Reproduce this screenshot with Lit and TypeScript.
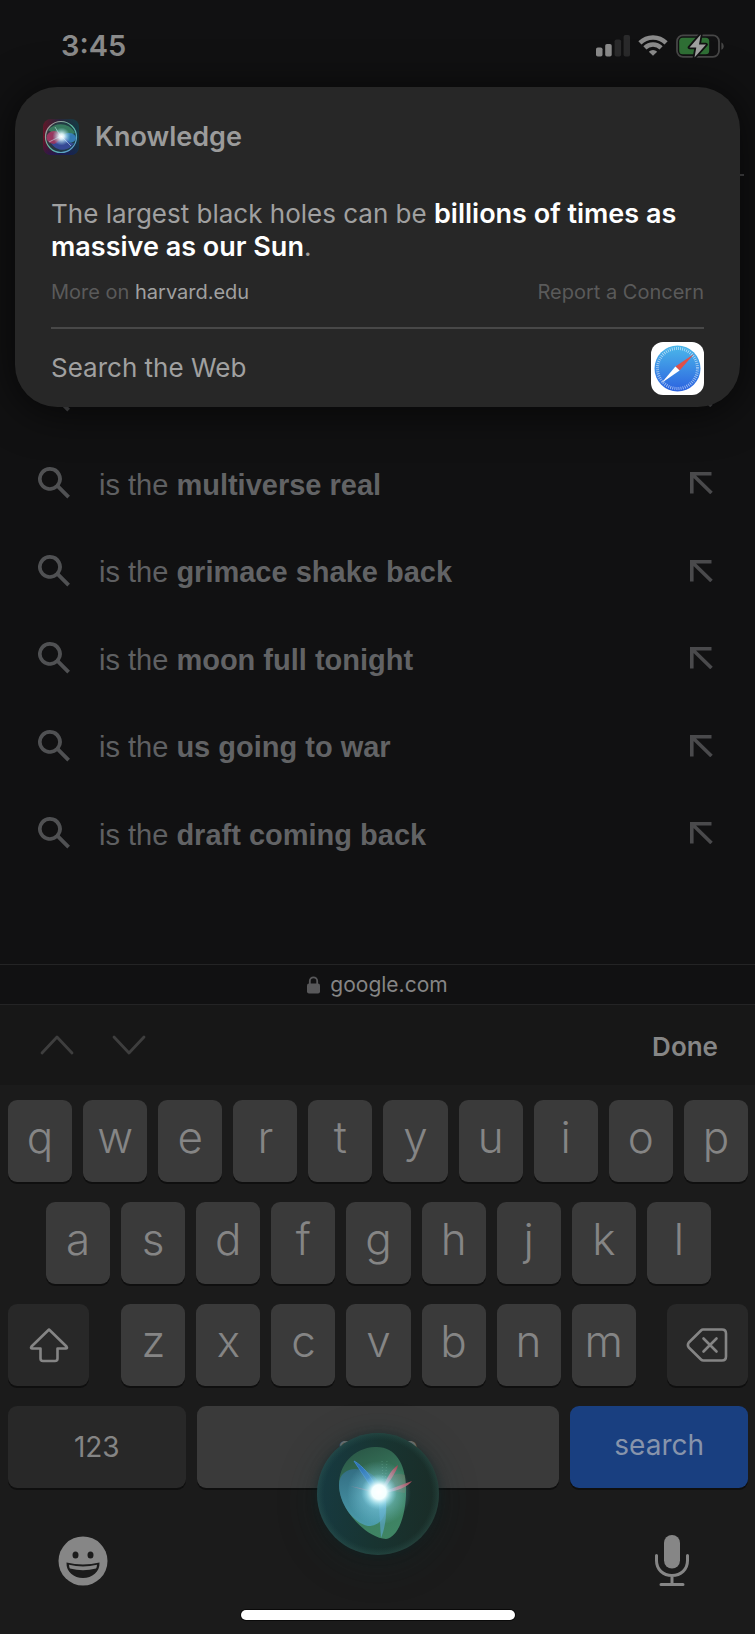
import { LitElement, html, css, svg } from "lit";
import { customElement, property } from "lit/decorators.js";

const searchGlyph = svg`<path d="M12.5 1a11.5 11.5 0 1 0 7 20.6l9.9 9.9 2.6-2.6-9.9-9.9A11.5 11.5 0 0 0 12.5 1zm0 3.6a8 8 0 1 1 0 16 8 8 0 0 1 0-16z" fill="currentColor"/>`;

@customElement("status-bar")
class StatusBar extends LitElement {
  static styles = css`
    :host {
      display: flex;
      align-items: center;
      justify-content: space-between;
      height: 87px;
      padding: 4px 31px 0 61px;
      box-sizing: border-box;
      color: #8b8b8b;
    }
    .time {
      font-size: 29px;
      font-weight: 600;
      line-height: 34px;
    }
    .icons {
      display: flex;
      align-items: center;
      gap: 8px;
    }
    svg {
      display: block;
    }
  `;
  render() {
    return html`
      <time class="time">3:45</time>
      <div class="icons">
        <svg width="34" height="22" viewBox="0 0 34 22" fill="#8b8b8b">
          <rect x="0" y="12.5" width="6.5" height="9" rx="1.8" />
          <rect x="9.2" y="9" width="6.5" height="12.5" rx="1.8" />
          <rect x="18.6" y="4.5" width="6.5" height="17" rx="1.8" fill="#2a2a2b" />
          <rect x="27.6" y="0" width="6.4" height="21.5" rx="1.8" fill="#2a2a2b" />
        </svg>
        <svg width="30" height="24" viewBox="0 0 30 24" fill="none" stroke="#8b8b8b" stroke-width="4.4">
          <path d="M1.9 8.9A18.5 18.5 0 0 1 28.1 8.9" />
          <path d="M6.9 13.9A11.5 11.5 0 0 1 23.1 13.9" />
          <path d="M10.8 17.8A6 6 0 0 1 19.2 17.8L15 21.8z" fill="#8b8b8b" stroke="none" />
        </svg>
        <svg width="48" height="26" viewBox="0 0 48 26">
          <rect x="1" y="2.4" width="42" height="21.4" rx="6" fill="none" stroke="#474747" stroke-width="1.8" />
          <path d="M45.4 9.6c3 1 3 6 0 7.2z" fill="#474747" />
          <rect x="3.2" y="4.8" width="30" height="16.5" rx="3.5" fill="#2f6f35" />
          <path
            d="M24.8 1.5L13.5 14.4h6.8l-1.8 10L30 11.6h-7z"
            fill="#a0a0a0"
            stroke="#111112"
            stroke-width="3.6"
            stroke-linejoin="round"
            paint-order="stroke"
          />
        </svg>
      </div>
    `;
  }
}

@customElement("siri-card")
class SiriCard extends LitElement {
  static styles = css`
    :host {
      display: block;
      box-sizing: border-box;
      padding: 31px 36px 12px;
      border-radius: 42px;
      background: #272727;
      box-shadow: 0 4px 44px #000000b0;
      color: #a0a0a0;
    }
    header {
      display: flex;
      align-items: center;
      gap: 16px;
      margin-left: -8px;
      height: 37px;
    }
    h1 {
      margin: 0;
      font-size: 27px;
      font-weight: 600;
      line-height: 33px;
      color: #9b9b9b;
    }
    .answer {
      margin: 42px 0 0;
      font-size: 26px;
      line-height: 33px;
    }
    .answer strong {
      font-size: 27px;
      font-weight: 600;
      color: #fff;
    }
    .meta {
      display: flex;
      justify-content: space-between;
      margin-top: 15px;
      padding-bottom: 21px;
      border-bottom: 2px solid #484848;
      font-size: 20px;
      line-height: 28px;
      color: #5a5a5a;
    }
    a {
      color: inherit;
      text-decoration: none;
    }
    .meta .source {
      color: #a0a0a0;
    }
    .web {
      display: flex;
      align-items: center;
      justify-content: space-between;
      padding-top: 13px;
      font-size: 26px;
      line-height: 32px;
    }
    .web span {
      padding-bottom: 2px;
    }
    svg {
      display: block;
    }
  `;
  render() {
    return html`
      <header>
        <svg width="36" height="36" viewBox="0 0 36 36">
          <defs>
            <linearGradient id="base" x1="0" x2="1">
              <stop offset="0" stop-color="#6a1228" />
              <stop offset=".45" stop-color="#2b1a3a" />
              <stop offset="1" stop-color="#123c48" />
            </linearGradient>
            <linearGradient id="fade" x1="0" y1="0" x2="0" y2="1">
              <stop offset="0" stop-color="#1d4a38" stop-opacity=".2" />
              <stop offset=".5" stop-color="#222" stop-opacity="0" />
              <stop offset="1" stop-color="#131a60" stop-opacity=".6" />
            </linearGradient>
            <linearGradient id="rim" x1="0" y1="0" x2="1" y2="1">
              <stop offset="0" stop-color="#c08a9a" />
              <stop offset=".5" stop-color="#5cc0a0" />
              <stop offset="1" stop-color="#5a90dd" />
            </linearGradient>
            <radialGradient id="spark">
              <stop offset="0" stop-color="#fff" />
              <stop offset=".3" stop-color="#e8fbff" stop-opacity=".9" />
              <stop offset="1" stop-color="#9de" stop-opacity="0" />
            </radialGradient>
          </defs>
          <rect width="36" height="36" rx="8" fill="url(#base)" />
          <rect width="36" height="36" rx="8" fill="url(#fade)" />
          <circle cx="18" cy="18" r="15.5" fill="#20494a" fill-opacity=".6" stroke="url(#rim)" stroke-width="1.2" />
          <path d="M5 11C12 3 26 3 32 14L20 20z" fill="#3f8f68" opacity=".75" />
          <ellipse cx="11" cy="18.5" rx="7.5" ry="6.5" fill="#b23868" opacity=".8" />
          <ellipse cx="26" cy="19" rx="7" ry="5" fill="#3a86c8" opacity=".85" />
          <path d="M8 24c4 4 8-4 12-6s5 8 11 6c-4 8-17 10-23 0z" fill="#3d4fb0" opacity=".75" />
          <path d="M12 8l6 10M28 27l-9-9M6 23l12-6" stroke="#c9e8ee" stroke-width=".8" opacity=".7" />
          <circle cx="18.5" cy="17.5" r="9" fill="url(#spark)" />
        </svg>
        <h1>Knowledge</h1>
      </header>
      <p class="answer">The largest black holes can be <strong>billions of times as massive as our Sun</strong>.</p>
      <div class="meta">
        <span>More on <a class="source" href="#harvard">harvard.edu</a></span>
        <a href="#report">Report a Concern</a>
      </div>
      <a class="web" href="#web">
        <span>Search the Web</span>
        <svg width="53" height="53" viewBox="0 0 53 53">
          <defs>
            <linearGradient id="sky" x1="0" y1="0" x2="0" y2="1">
              <stop offset="0" stop-color="#4bb8ea" />
              <stop offset="1" stop-color="#2c62e0" />
            </linearGradient>
          </defs>
          <rect width="53" height="53" rx="12" fill="#fff" />
          <circle cx="26.5" cy="26.5" r="23" fill="url(#sky)" />
          <circle cx="26.5" cy="26.5" r="20" fill="none" stroke="#fff" stroke-opacity=".6" stroke-width="3" stroke-dasharray=".8 1.294" />
          <path d="M43 12L24.4 24.4l4.2 4.2z" fill="#df5049" />
          <path d="M10.5 41L24.4 24.4l4.2 4.2z" fill="#fff" />
        </svg>
      </a>
    `;
  }
}

@customElement("suggestion-list")
class SuggestionList extends LitElement {
  @property({ attribute: false }) items: string[] = [];
  static styles = css`
    ul {
      display: grid;
      grid-auto-rows: 1fr;
      height: 525px;
      margin: 0;
      padding: 0 42px 0 37px;
      list-style: none;
    }
    li {
      display: flex;
      align-items: center;
      justify-content: space-between;
    }
    button {
      display: flex;
      align-items: center;
      gap: 28px;
      padding: 0;
      border: 0;
      background: none;
      font: 29px/32px "Liberation Sans", Arial, sans-serif;
      color: #5f6062;
    }
    span {
      padding-top: 3px;
    }
    b {
      font-weight: 700;
      color: #626365;
    }
    .search {
      color: #505153;
    }
    .fill {
      color: #4a4a4c;
    }
    svg {
      display: block;
    }
  `;
  render() {
    return html`<ul>
      ${this.items.map(
        (t) => html`<li>
          <button aria-label=${t ? `is the ${t}` : "search"}>
            <svg class="search" width="34" height="34" viewBox="0 0 33 33">${searchGlyph}</svg>
            ${t ? html`<span>is the <b>${t}</b></span>` : ""}
          </button>
          <button class="fill" aria-label="fill in">
            <svg width="23" height="22" viewBox="0 0 23 22" fill="none" stroke="currentColor" stroke-width="3.6">
              <path d="M1.8 21.5V1.8H21.5M2 2L21.5 21" />
            </svg>
          </button>
        </li>`
      )}
    </ul>`;
  }
}

@customElement("siri-orb")
class SiriOrb extends LitElement {
  static styles = css`
    :host {
      display: block;
      border-radius: 50%;
      box-shadow: 0 8px 40px #0f2c2c55, 0 0 10px #0e222480;
    }
    svg {
      display: block;
    }
  `;
  render() {
    return html`<svg width="122" height="122" viewBox="0 0 122 122" role="img" aria-label="Siri">
      <defs>
        <linearGradient id="ball" x1="0" y1=".4" x2="1" y2=".5">
          <stop offset="0" stop-color="#173a41" />
          <stop offset=".5" stop-color="#183431" />
          <stop offset="1" stop-color="#1a2c27" />
        </linearGradient>
        <radialGradient id="edge">
          <stop offset=".88" stop-color="#2a5650" stop-opacity="0" />
          <stop offset="1" stop-color="#356059" stop-opacity=".35" />
        </radialGradient>
        <linearGradient id="egg" x1=".3" y1="0" x2=".6" y2="1">
          <stop offset="0" stop-color="#2a5746" />
          <stop offset=".5" stop-color="#3b7d60" />
          <stop offset="1" stop-color="#3f8564" />
        </linearGradient>
        <linearGradient id="blue" x1=".4" y1="0" x2=".5" y2="1">
          <stop offset="0" stop-color="#34708a" />
          <stop offset="1" stop-color="#4d9fb4" />
        </linearGradient>
        <radialGradient id="flare">
          <stop offset="0" stop-color="#fff" />
          <stop offset=".4" stop-color="#f4ffff" />
          <stop offset=".65" stop-color="#b8ecf6" stop-opacity=".6" />
          <stop offset="1" stop-color="#7fd0e6" stop-opacity="0" />
        </radialGradient>
        <radialGradient id="halo">
          <stop offset="0" stop-color="#c8f4fb" stop-opacity=".9" />
          <stop offset=".4" stop-color="#8fdcec" stop-opacity=".5" />
          <stop offset="1" stop-color="#7fd0e6" stop-opacity="0" />
        </radialGradient>
        <linearGradient id="redray" x1="0" y1="1" x2="1" y2="0">
          <stop offset="0" stop-color="#e0a0a8" />
          <stop offset="1" stop-color="#a04554" />
        </linearGradient>
      </defs>
      <circle cx="61" cy="61" r="61" fill="url(#ball)" />
      <circle cx="61" cy="61" r="61" fill="url(#edge)" />
      <path d="M58 14C36 15 22 32 22 52C23 78 50 105 69 106C82 104 90 80 89 53C88 30 78 13 58 14z" fill="url(#egg)" />
      <path d="M22 52C22 41 30 36 38 36C60 36 72 60 69 76C67 88 60 93 51 93C36 90 22 70 22 52z" fill="url(#blue)" opacity=".9" />
      <path d="M60 56C64 48 76 38 88 42C89 50 89 54 88 60z" fill="#84705f" opacity=".35" />
      <path d="M61 60L64 105C68 96 71 78 68 62z" fill="#5aa3c4" opacity=".7" />
      <path d="M37 28L55 55L59 54C54 43 46 33 37 28z" fill="#2d72b8" stroke="#3f86c9" stroke-width="1" />
      <path d="M66 54C70 44 75 36 81 32C80 38 73 48 67 56z" fill="url(#redray)" />
      <path d="M68 58L95 48C92 53 80 58 68 60z" fill="url(#redray)" />
      <path d="M33 53L60 61L58 58z" fill="#b27890" opacity=".6" />
      <path d="M66 50L65 27M68 50L70 28" stroke="#6fae90" stroke-width=".6" stroke-dasharray="1 2" opacity=".7" />
      <circle cx="62" cy="60" r="32" fill="url(#halo)" />
      <circle cx="62" cy="59" r="18" fill="url(#flare)" />
    </svg>`;
  }
}

@customElement("soft-keyboard")
class SoftKeyboard extends LitElement {
  static styles = css`
    :host {
      display: block;
      background: #1b1b1b;
      padding: 15px 7px 0 8px;
      color: #858585;
    }
    .rows {
      display: flex;
      flex-direction: column;
      gap: 20px;
    }
    .row {
      display: flex;
      gap: 11px;
    }
    .inset {
      padding: 0 37px 0 38px;
    }
    button {
      display: flex;
      align-items: center;
      justify-content: center;
      height: 82px;
      min-width: 0;
      padding: 0;
      border: 0;
      border-radius: 9px;
      box-shadow: 0 2px 0 #0f0f0f;
      color: inherit;
      font-family: inherit;
      font-size: 28px;
      font-weight: 400;
      background: #3a3a3a;
      flex: 1 1 0;
    }
    .letter {
      padding-bottom: 8px;
      font-size: 44px;
      font-weight: 350;
    }
    .dark {
      background: #282828;
    }
    .side {
      flex: 0 0 11%;
    }
    .shift {
      margin-right: 21px;
    }
    .delete {
      margin-left: 20px;
    }
    .wide {
      flex: 0 0 24%;
    }
    .go {
      background: #193f80;
      color: #8794ab;
      padding-bottom: 4px;
    }
    .tools {
      position: relative;
      display: flex;
      justify-content: space-between;
      align-items: center;
      height: 122px;
      box-sizing: border-box;
      padding: 24px 58px 0 50px;
    }
    .tools button {
      flex: none;
      height: auto;
      background: none;
      box-shadow: none;
    }
    .orb {
      position: absolute;
      left: 50%;
      top: -55px;
      transform: translateX(-50%);
    }
    .home {
      width: 37%;
      height: 10px;
      margin: 0 auto;
      border-radius: 5px;
      background: #fff;
      box-shadow: 0 0 0 1px #0a0a0a;
    }
    .foot {
      padding-bottom: 14px;
    }
  `;
  private letters(s: string) {
    return [...s].map((c) => html`<button class="letter">${c}</button>`);
  }
  render() {
    return html`
      <div class="rows">
        <div class="row">${this.letters("qwertyuiop")}</div>
        <div class="row inset">${this.letters("asdfghjkl")}</div>
        <div class="row">
          <button class="dark side shift" aria-label="shift">
            <svg width="40" height="36" viewBox="0 0 40 36" fill="none" stroke="currentColor" stroke-width="2.6" stroke-linejoin="round">
              <path d="M20 2.5L2.5 19.5C1.6 20.6 2 21.5 3.3 21.5H11.5V31.5Q11.5 34 14 34H26Q28.5 34 28.5 31.5V21.5H36.7C38 21.5 38.4 20.6 37.5 19.5z" />
            </svg>
          </button>
          ${this.letters("zxcvbnm")}
          <button class="dark side delete" aria-label="delete">
            <svg width="42" height="36" viewBox="0 0 42 36" fill="none" stroke="currentColor" stroke-width="2.6" stroke-linejoin="round" stroke-linecap="round">
              <path d="M17 2.5H36Q40 2.5 40 6.5V29.5Q40 33.5 36 33.5H17.5Q16 33.5 15 32.5L2.8 20.5Q1 18 2.8 15.5L15 3.5Q16 2.5 17 2.5z" />
              <path d="M17.5 11.5L30.5 24.5M30.5 11.5L17.5 24.5" />
            </svg>
          </button>
        </div>
        <div class="row">
          <button class="dark wide">123</button>
          <button>space</button>
          <button class="wide go">search</button>
        </div>
      </div>
      <div class="tools">
        <button aria-label="emoji">
          <svg width="50" height="50" viewBox="0 0 50 50">
            <circle cx="25" cy="25" r="24.5" fill="#868686" />
            <ellipse cx="17.5" cy="19" rx="3" ry="3.6" fill="#1b1b1b" />
            <ellipse cx="32.5" cy="19" rx="3" ry="3.6" fill="#1b1b1b" />
            <path d="M8.5 26.5Q25 30.5 41.5 26.5C42 36 34 42 25 42S8 36 8.5 26.5z" fill="#1b1b1b" />
            <path d="M11 28.8Q25 32 39 28.8C38.8 31 38.5 31.8 38 32.6Q25 36 12 32.6C11.5 31.8 11.2 31 11 28.8z" fill="#868686" />
          </svg>
        </button>
        <siri-orb class="orb"></siri-orb>
        <button aria-label="dictate">
          <svg width="36" height="52" viewBox="0 0 36 52" fill="none" stroke="#868686" stroke-width="3" stroke-linecap="round">
            <rect x="10" y="0" width="16" height="33.5" rx="8" fill="#868686" stroke="none" />
            <path d="M2.5 20.5V25.5C2.5 34.5 9 40.5 18 40.5S33.5 34.5 33.5 25.5V20.5M18 40.5V49.5M7 49.5H29" />
          </svg>
        </button>
      </div>
      <div class="foot"><div class="home"></div></div>
    `;
  }
}

@customElement("app-root")
class AppRoot extends LitElement {
  static styles = css`
    :host {
      display: flex;
      flex-direction: column;
      min-height: 100vh;
      background: #111112;
      color: #8b8b8b;
      font-family: Inter, "Noto Sans", sans-serif;
    }
    main {
      flex: 1;
      display: grid;
      align-items: start;
    }
    .page,
    .card {
      grid-area: 1 / 1;
    }
    .card {
      z-index: 1;
      margin: 0 15px;
    }
    .field {
      height: 87px;
      margin: 0 11px 176px 20px;
      border-bottom: 2px solid #4a4a4c;
    }
    .url {
      display: flex;
      align-items: center;
      justify-content: center;
      gap: 10px;
      height: 39px;
      border: solid #242425;
      border-width: 1px 0;
      font-size: 21px;
      color: #858585;
    }
    .bar {
      display: flex;
      align-items: center;
      height: 80px;
      padding: 0 37px 0 39px;
      background: #171717;
    }
    .bar button {
      padding: 0;
      border: 0;
      background: none;
      color: #3e3e3e;
      font-family: inherit;
    }
    .bar .down {
      margin-left: 36px;
    }
    .bar .done {
      margin-left: auto;
      padding-top: 3px;
      font-size: 26px;
      font-weight: 600;
      line-height: 32px;
      color: #868686;
    }
    svg {
      display: block;
    }
  `;
  private items = [
    "",
    "multiverse real",
    "grimace shake back",
    "moon full tonight",
    "us going to war",
    "draft coming back",
  ];
  render() {
    return html`
      <status-bar></status-bar>
      <main>
        <div class="page">
          <div class="field"></div>
          <suggestion-list .items=${this.items}></suggestion-list>
        </div>
        <siri-card class="card"></siri-card>
      </main>
      <div class="url">
        <svg width="13" height="18" viewBox="0 0 13 18">
          <rect x="0" y="7.5" width="13" height="10" rx="2" fill="#58585a" />
          <path d="M2.8 8V5a3.7 3.7 0 0 1 7.4 0V8" fill="none" stroke="#58585a" stroke-width="1.8" />
        </svg>
        <span>google.com</span>
      </div>
      <div class="bar">
        <button aria-label="previous">
          <svg width="36" height="22" viewBox="0 0 36 22" fill="none" stroke="currentColor" stroke-width="2.8" stroke-linecap="round" stroke-linejoin="round">
            <path d="M3 19L18 3L33 19" />
          </svg>
        </button>
        <button class="down" aria-label="next">
          <svg width="36" height="22" viewBox="0 0 36 22" fill="none" stroke="currentColor" stroke-width="2.8" stroke-linecap="round" stroke-linejoin="round">
            <path d="M3 3L18 19L33 3" />
          </svg>
        </button>
        <button class="done">Done</button>
      </div>
      <soft-keyboard></soft-keyboard>
    `;
  }
}
